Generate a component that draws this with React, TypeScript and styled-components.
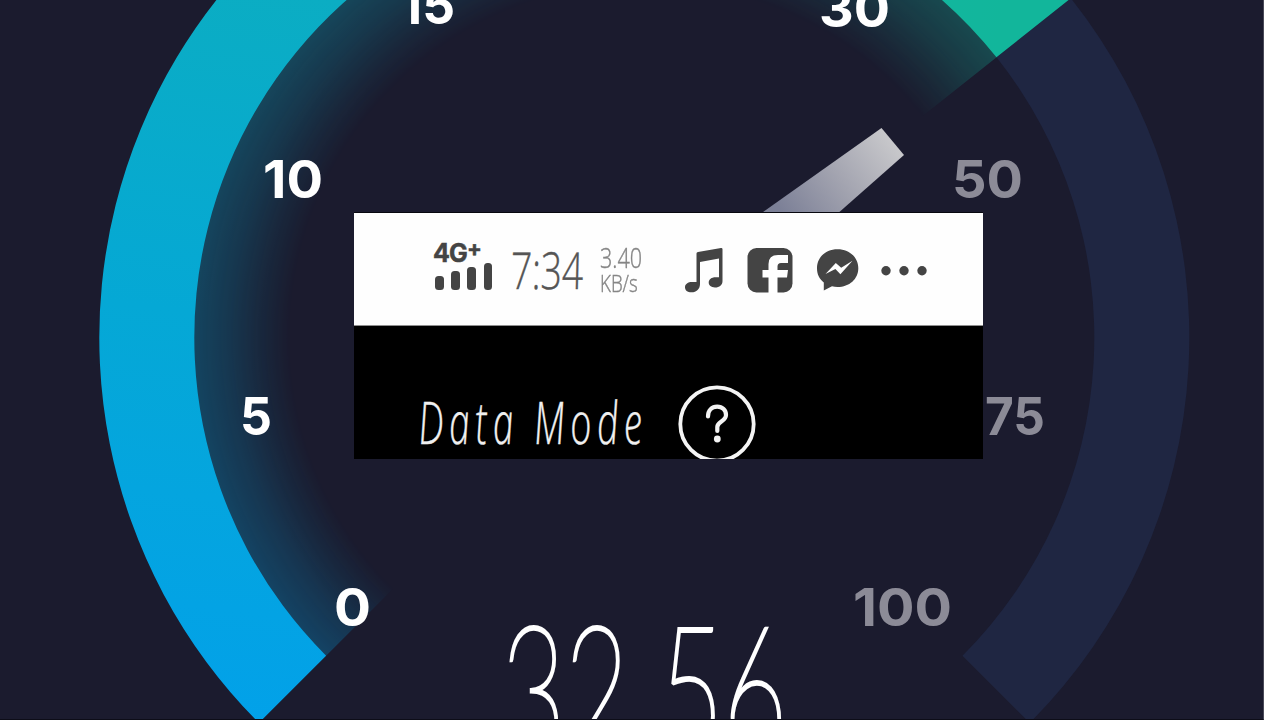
import React from "react";
import styled, { createGlobalStyle } from "styled-components";

const GlobalStyle = createGlobalStyle`
  body { margin: 0; background: #fff; overflow: hidden; }
`;

const Screen = styled.main`
  position: relative;
  display: flex;
  width: 1280px;
  height: 720px;
  overflow: hidden;
  background: #fff;
`;

const Stage = styled.section`
  display: grid;
  flex: 0 0 1264px;
  box-sizing: border-box;
  height: 720px;
  overflow: hidden;
  background: #1b1b2e;
  border-right: 1px solid #4a4a58;
  border-bottom: 1px solid #0d0d18;
`;

const Dial = styled.svg`
  display: block;
  width: 1263px;
  height: 719px;
`;

const Tick = styled.text<{ $dim?: boolean }>`
  font-family: Inter, "Liberation Sans", sans-serif;
  font-weight: 700;
  font-size: 52.5px;
  fill: ${(p) => (p.$dim ? "#8c8b97" : "#fff")};
`;

const Reading = styled.text`
  font-family: Lato, "Liberation Sans", sans-serif;
  font-weight: 100;
  font-size: 182px;
  fill: #fff;
  stroke: #fff;
  stroke-width: 4px;
`;

const Panel = styled.section`
  position: absolute;
  left: 354px;
  top: 212px;
  display: flex;
  flex-direction: column;
  box-sizing: border-box;
  width: 629px;
  height: 247px;
  border-top: 1px solid #08080f;
  background: #000;
  overflow: hidden;
`;

const StatusBar = styled.header`
  display: flex;
  flex: 0 0 113px;
  align-items: flex-start;
  box-sizing: border-box;
  padding: 27px 0 0 79px;
  background: #fefefe;
  border-bottom: 1px solid #8e8e8e;
`;

const Network = styled.div`
  width: 61px;
  margin-right: 16px;
`;

const NetworkType = styled.div`
  display: flex;
  height: 22px;
  color: #444;
  font: 700 25px/26px Inter, "Liberation Sans", sans-serif;
  letter-spacing: -0.9px;
  -webkit-text-stroke: 0.5px #444;
`;

const Plus = styled.span`
  font-size: 22px;
  line-height: 17px;
`;

const Bars = styled.div`
  display: flex;
  align-items: flex-end;
  gap: 7.5px;
  height: 28px;
  padding-left: 2px;
`;

const Bar = styled.i<{ $h: number }>`
  width: 8.7px;
  height: ${(p) => p.$h}px;
  border-radius: 3.5px;
  background: #444;
`;

const Hand = styled.span<{ $size: number; $line: number; $scale: number; $gap?: number; $color: string; $italic?: boolean; $lean?: number }>`
  display: block;
  width: max-content;
  white-space: pre;
  font-family: "Open Sans", "Noto Sans", sans-serif;
  font-weight: 300;
  font-style: ${(p) => (p.$italic ? "italic" : "normal")};
  font-size: ${(p) => p.$size}px;
  line-height: ${(p) => p.$line}px;
  letter-spacing: ${(p) => p.$gap ?? 0}px;
  color: ${(p) => p.$color};
  -webkit-text-stroke: 0.4px ${(p) => p.$color};
  transform: scaleX(${(p) => p.$scale}) skewX(${(p) => p.$lean ?? 0}deg);
  transform-origin: 0 100%;
`;

const Clock = styled.div`
  width: 72px;
  margin: 1px 18px 0 0;
`;

const Rate = styled.div`
  width: 42px;
  margin: 5px 39px 0 0;
`;

const StatusIcons = styled.svg`
  width: 260px;
  height: 60px;
`;

const ModeRow = styled.div`
  display: flex;
  align-items: flex-start;
  padding: 58px 0 0 66px;
`;

const ModeLabel = styled.div`
  width: 257px;
  padding-top: 5px;
`;

const Help = styled.svg`
  flex: none;
  width: 80px;
  height: 80px;
`;

type TickData = { label: string; x: number; y: number; w: number; dim?: boolean };

const ticks: TickData[] = [
  { label: "15", x: 400, y: 24, w: 55 },
  { label: "10", x: 263, y: 198, w: 60 },
  { label: "5", x: 240, y: 435, w: 32 },
  { label: "0", x: 334, y: 626, w: 37 },
  { label: "30", x: 819, y: 27, w: 71 },
  { label: "50", x: 952, y: 198, w: 71, dim: true },
  { label: "75", x: 985, y: 435, w: 60, dim: true },
  { label: "100", x: 853, y: 626, w: 99, dim: true },
];

const CX = 644.3;
const CY = 337.5;

const point = (r: number, deg: number) => {
  const a = (deg * Math.PI) / 180;
  return `${CX + r * Math.cos(a)} ${CY - r * Math.sin(a)}`;
};

/* Ring sector running clockwise between two angles, in degrees. */
const sector = (outer: number, inner: number, from: number, to: number) => {
  const large = from - to > 180 ? 1 : 0;
  return `M${point(outer, from)}A${outer} ${outer} 0 ${large} 1 ${point(outer, to)}L${point(inner, to)}A${inner} ${inner} 0 ${large} 0 ${point(inner, from)}Z`;
};

function Gauge() {
  return (
    <Dial viewBox="0 0 1263 719">
      <defs>
        <linearGradient id="cool" gradientUnits="userSpaceOnUse" x1="240" y1="720" x2="330" y2="0">
          <stop offset="0" stopColor="#02a1e9" />
          <stop offset="0.3" stopColor="#04a5df" />
          <stop offset="0.55" stopColor="#05a8d5" />
          <stop offset="1" stopColor="#0badc3" />
        </linearGradient>
        <linearGradient id="warm" gradientUnits="userSpaceOnUse" x1="644" y1="0" x2="1000" y2="40">
          <stop offset="0" stopColor="#0db1b6" />
          <stop offset="0.8" stopColor="#12b69e" />
          <stop offset="1" stopColor="#12b69b" />
        </linearGradient>
        <radialGradient id="fade" gradientUnits="userSpaceOnUse" cx={CX} cy={CY} r="451">
          <stop offset="0.785" stopColor="#fff" stopOpacity="0" />
          <stop offset="0.85" stopColor="#fff" stopOpacity="0.09" />
          <stop offset="0.92" stopColor="#fff" stopOpacity="0.2" />
          <stop offset="1" stopColor="#fff" stopOpacity="0.3" />
        </radialGradient>
        <mask id="glow" maskUnits="userSpaceOnUse" x="0" y="-200" width="1280" height="1000">
          <circle cx={CX} cy={CY} r="451" fill="url(#fade)" />
        </mask>
        <linearGradient id="needle" gradientUnits="userSpaceOnUse" x1="893" y1="141" x2="790" y2="222">
          <stop offset="0" stopColor="#c8c8cb" />
          <stop offset="0.5" stopColor="#a3a4b0" />
          <stop offset="1" stopColor="#7c8097" />
        </linearGradient>
      </defs>
      <path d={sector(545, 450, 38.5, -45)} fill="#1f2642" />
      <g mask="url(#glow)">
        <path d={sector(451, 340, 225, 90)} fill="url(#cool)" />
        <path d={sector(451, 340, 90, 38.5)} fill="url(#warm)" />
      </g>
      <path d={sector(545, 450, 225, 90)} fill="url(#cool)" />
      <path d={sector(545, 450, 90, 38.5)} fill="url(#warm)" />
      <path d="M881.5 128L904 155L836 215H759Z" fill="url(#needle)" />
      {ticks.map((t) => (
        <Tick key={t.label} x={t.x} y={t.y} textLength={t.w} lengthAdjust="spacingAndGlyphs" $dim={t.dim}>
          {t.label}
        </Tick>
      ))}
      <Reading transform="translate(501 757) scale(.61 1)" x="0 104 197 260 364">
        32.56
      </Reading>
    </Dial>
  );
}

export default function App() {
  return (
    <Screen>
      <GlobalStyle />
      <Stage>
        <Gauge />
      </Stage>
      <Panel>
        <StatusBar>
          <Network>
            <NetworkType>
              4G<Plus>+</Plus>
            </NetworkType>
            <Bars>
              <Bar $h={14} />
              <Bar $h={19} />
              <Bar $h={23} />
              <Bar $h={27.5} />
            </Bars>
          </Network>
          <Clock>
            <Hand $size={51} $line={56} $scale={0.73} $color="#555" $lean={-2}>7:34</Hand>
          </Clock>
          <Rate>
            <Hand $size={27} $line={25} $scale={0.8} $color="#858585">3.40</Hand>
            <Hand $size={24} $line={25} $scale={0.78} $color="#858585">KB/s</Hand>
          </Rate>
          <StatusIcons viewBox="681 240 260 60" fill="#444">
            <path d="M696.5 253.5Q696.5 252.3 698 252L721 248Q722.5 247.8 722.5 249.3V281C722.5 285 719.5 287.5 715 287.5C711 287.5 708.7 285.4 708.7 282.6C708.7 279.3 711.5 277.2 715.5 277.2H719V258.5L700 262V284C700 289 696.5 292.3 691.5 292.3C687.3 292.3 685 290.3 685 287.3C685 284 688 282 692 282H696.5Z" />
            <rect x="747.5" y="248" width="45" height="44.5" rx="9" />
            <path fill="#fff" d="M768.5 293V277.5H762.5V270H768.5V264Q768.5 255 778 255H788V263H781Q777.5 263 777.5 266.5V270H788L787 277.5H777.5V293Z" />
            <path d="M837.5 249.3C849.5 249.3 858.3 257.5 858.3 268.2S849.5 287 837.5 287Q834.5 287 832 286.3L823.8 290.5V282.4C819.3 279 817 274 817 268.2C817 257.5 825.5 249.3 837.5 249.3Z" />
            <path fill="#fff" d="M825.5 274L835.8 263L841.2 267.7L852.5 260.8L840.4 274.2L835.4 269Z" />
            <circle cx="886" cy="270.7" r="4.7" />
            <circle cx="904" cy="270.7" r="4.7" />
            <circle cx="922" cy="270.7" r="4.7" />
          </StatusIcons>
        </StatusBar>
        <ModeRow>
          <ModeLabel>
            <Hand $size={59} $line={64} $scale={0.64} $gap={8.3} $lean={6} $italic $color="#f0f0f0">Data Mode</Hand>
          </ModeLabel>
          <Help viewBox="677 384 80 80" fill="none" stroke="#f4f4f4">
            <circle cx="717" cy="424" r="36.7" strokeWidth="3.8" />
            <path d="M708 416.5C708 410 712 406.7 717.2 406.7C722.5 406.7 726 410.3 726 415C726 421.5 717.3 421.5 717.3 427V431" strokeWidth="4.2" strokeLinecap="round" />
            <circle cx="717.3" cy="439" r="3.4" fill="#f4f4f4" stroke="none" />
          </Help>
        </ModeRow>
      </Panel>
    </Screen>
  );
}
